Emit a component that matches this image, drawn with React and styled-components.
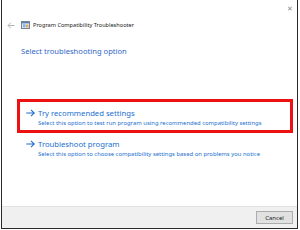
import React from 'react';
import styled, { createGlobalStyle } from 'styled-components';

const GlobalStyle = createGlobalStyle`
	html, body {
		margin: 0;
		padding: 0;
		background: #ffffff;
	}
	body {
		font-family: "Noto Sans", "Liberation Sans", sans-serif;
	}
`;

const Window = styled.div`
	box-sizing: border-box;
	margin-left: 1px;
	width: 297px;
	height: 229px;
	border: 1px solid #2b2b2b;
	border-top: none;
	background: #ffffff;
	display: flex;
	flex-direction: column;
	position: relative;
`;

const CloseButton = styled.div`
	position: absolute;
	top: 4px;
	right: 3px;
	width: 9px;
	height: 9px;
	color: #8a8a8a;
	font-size: 7px;
	line-height: 9px;
	text-align: center;
`;

const TitleBar = styled.div`
	display: flex;
	align-items: center;
	padding: 20px 0 0 5px;
	height: 10px;
`;

const BackArrow = styled.svg`
	width: 8px;
	height: 7px;
`;

const AppIcon = styled.svg`
	width: 9px;
	height: 8px;
	margin: 0 3px 0 6px;
`;

const TitleText = styled.span`
	font-size: 5.6px;
	color: #1a1a1a;
`;

const Content = styled.div`
	padding: 0 7px 0 18px;
	display: flex;
	flex-direction: column;
`;

const Heading = styled.h1`
	margin: 16px 0 0 1px;
	font-size: 7.6px;
	line-height: 11px;
	font-weight: normal;
	color: #2f66c8;
`;

const OptionBox = styled.div`
	margin-top: ${(p) => p.$top}px;
	outline: ${(p) => (p.$highlight ? '3px solid #ee1111' : 'none')};
	height: 28px;
	padding: 5px 0 0 6px;
	box-sizing: border-box;
	display: flex;
	align-items: flex-start;
`;

const Arrow = styled.svg`
	width: 9px;
	height: 8px;
	margin-top: 2px;
	flex-shrink: 0;
`;

const OptionText = styled.div`
	margin-left: 3px;
	display: flex;
	flex-direction: column;
`;

const OptionTitle = styled.span`
	font-size: 7.7px;
	color: #1b6fd0;
	line-height: 12px;
`;

const OptionDesc = styled.span`
	font-size: 5.9px;
	color: #1b6fd0;
	line-height: 8px;
`;

const Footer = styled.div`
	margin-top: auto;
	height: 21px;
	background: #f0f0f0;
	border-top: 1px solid #e2e2e2;
	display: flex;
	align-items: center;
	justify-content: flex-end;
	padding-right: 4px;
`;

const CancelButton = styled.button`
	width: 37px;
	height: 13px;
	padding: 0;
	background: #e1e1e1;
	border: 1px solid #adadad;
	font-family: "Noto Sans", "Liberation Sans", sans-serif;
	font-size: 6px;
	color: #1a1a1a;
`;

const ArrowIcon = () => (
	<Arrow viewBox="0 0 9 8">
		<path d="M0.3 4 H8.3 M5 0.8 L8.3 4 L5 7.2" fill="none" stroke="#1b6fd0" strokeWidth="1.1" />
	</Arrow>
);

const options = [
	{
		title: 'Try recommended settings',
		desc: 'Select this option to test run program using recommended compatibility settings',
		highlight: true,
		top: 45,
	},
	{
		title: 'Troubleshoot program',
		desc: 'Select this option to choose compatibility settings based on problems you notice',
		highlight: false,
		top: 3,
	},
];

export default function App() {
	return (
		<>
			<GlobalStyle />
			<Window>
				<CloseButton>✕</CloseButton>
				<TitleBar>
					<BackArrow viewBox="0 0 8 7">
						<path d="M7.5 3.5 H1 M3.8 0.7 L1 3.5 L3.8 6.3" fill="none" stroke="#b5b5b5" strokeWidth="1" />
					</BackArrow>
					<AppIcon viewBox="0 0 9 8">
						<rect x="0.5" y="0.5" width="8" height="7" fill="#e8eef7" stroke="#7a8594" />
						<rect x="1" y="1" width="7" height="1.4" fill="#5a7fb5" />
						<rect x="1.8" y="3.2" width="2.8" height="3.2" fill="#8fb3e0" />
						<rect x="5" y="3.6" width="2.6" height="2.8" fill="#d6b35a" />
					</AppIcon>
					<TitleText>Program Compatibility Troubleshooter</TitleText>
				</TitleBar>
				<Content>
					<Heading>Select troubleshooting option</Heading>
					{options.map((o) => (
						<OptionBox key={o.title} $highlight={o.highlight} $top={o.top}>
							<ArrowIcon />
							<OptionText>
								<OptionTitle>{o.title}</OptionTitle>
								<OptionDesc>{o.desc}</OptionDesc>
							</OptionText>
						</OptionBox>
					))}
				</Content>
				<Footer>
					<CancelButton>Cancel</CancelButton>
				</Footer>
			</Window>
		</>
	);
}
